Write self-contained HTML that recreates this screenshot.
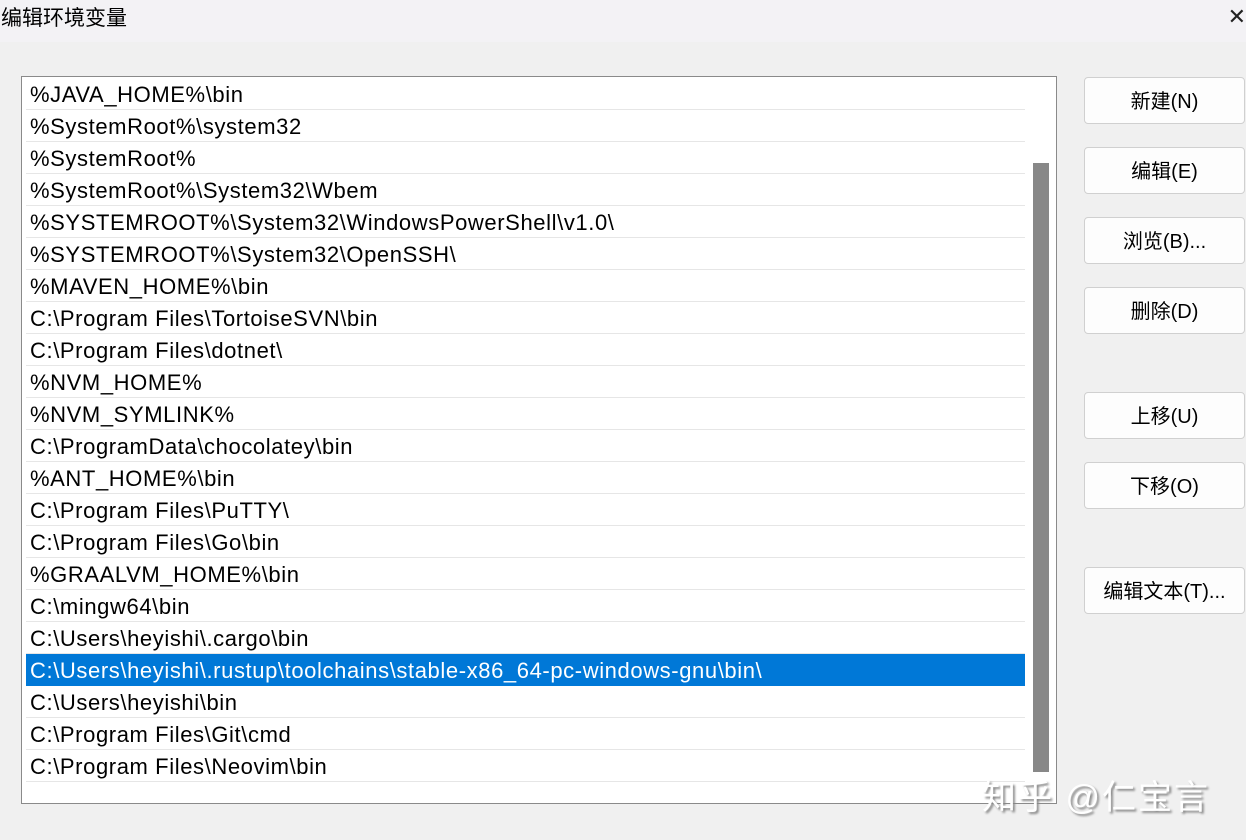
<!DOCTYPE html>
<html><head><meta charset="utf-8"><style>
*{margin:0;padding:0;box-sizing:border-box}
body{width:1246px;height:840px;background:#f0f0f0;font-family:"Liberation Sans","Noto Sans CJK SC",sans-serif;position:relative;overflow:hidden;color:#000}
.title{position:absolute;left:0;top:0;width:1246px;height:42px;background:#f3f2f5}
.title span{position:absolute;left:1px;top:2px;font-size:21px}
.close{position:absolute;right:0;top:4px;font-size:22px;color:#222}
.list{position:absolute;left:21px;top:76px;width:1036px;height:728px;background:#fff;border:1px solid #8a8a8a}
.row{position:absolute;left:4px;width:999px;height:32px;border-bottom:1px solid #e6e6e6;font-size:22px;letter-spacing:0.6px;line-height:34px;padding-left:4px;white-space:nowrap}
.sel{background:#0078d7;color:#fff;border-bottom-color:#0078d7}
.sb{position:absolute;left:1011px;top:86px;width:16px;height:609px;background:#888}
.btn{position:absolute;left:1084px;width:161px;height:47px;background:#fdfdfd;border:1px solid #d0d0d0;border-radius:4px;font-size:20px;text-align:center;line-height:49px}
.wm{position:absolute;left:982px;top:770px;font-size:34px;color:#fff;text-shadow:2px 2px 2px #888;letter-spacing:2px}
</style></head><body>
<div class="title"><span>编辑环境变量</span><div class="close">✕</div></div>
<div class="list">
<div class="row" style="top:1px">%JAVA_HOME%\bin</div>
<div class="row" style="top:33px">%SystemRoot%\system32</div>
<div class="row" style="top:65px">%SystemRoot%</div>
<div class="row" style="top:97px">%SystemRoot%\System32\Wbem</div>
<div class="row" style="top:129px">%SYSTEMROOT%\System32\WindowsPowerShell\v1.0\</div>
<div class="row" style="top:161px">%SYSTEMROOT%\System32\OpenSSH\</div>
<div class="row" style="top:193px">%MAVEN_HOME%\bin</div>
<div class="row" style="top:225px">C:\Program Files\TortoiseSVN\bin</div>
<div class="row" style="top:257px">C:\Program Files\dotnet\</div>
<div class="row" style="top:289px">%NVM_HOME%</div>
<div class="row" style="top:321px">%NVM_SYMLINK%</div>
<div class="row" style="top:353px">C:\ProgramData\chocolatey\bin</div>
<div class="row" style="top:385px">%ANT_HOME%\bin</div>
<div class="row" style="top:417px">C:\Program Files\PuTTY\</div>
<div class="row" style="top:449px">C:\Program Files\Go\bin</div>
<div class="row" style="top:481px">%GRAALVM_HOME%\bin</div>
<div class="row" style="top:513px">C:\mingw64\bin</div>
<div class="row" style="top:545px">C:\Users\heyishi\.cargo\bin</div>
<div class="row sel" style="top:577px">C:\Users\heyishi\.rustup\toolchains\stable-x86_64-pc-windows-gnu\bin\</div>
<div class="row" style="top:609px">C:\Users\heyishi\bin</div>
<div class="row" style="top:641px">C:\Program Files\Git\cmd</div>
<div class="row" style="top:673px">C:\Program Files\Neovim\bin</div>
<div class="sb"></div>
</div>
<div class="btn" style="top:77px">新建(N)</div>
<div class="btn" style="top:147px">编辑(E)</div>
<div class="btn" style="top:217px">浏览(B)...</div>
<div class="btn" style="top:287px">删除(D)</div>
<div class="btn" style="top:392px">上移(U)</div>
<div class="btn" style="top:462px">下移(O)</div>
<div class="btn" style="top:567px">编辑文本(T)...</div>
<div class="wm">知乎 @仁宝言</div>
</body></html>
